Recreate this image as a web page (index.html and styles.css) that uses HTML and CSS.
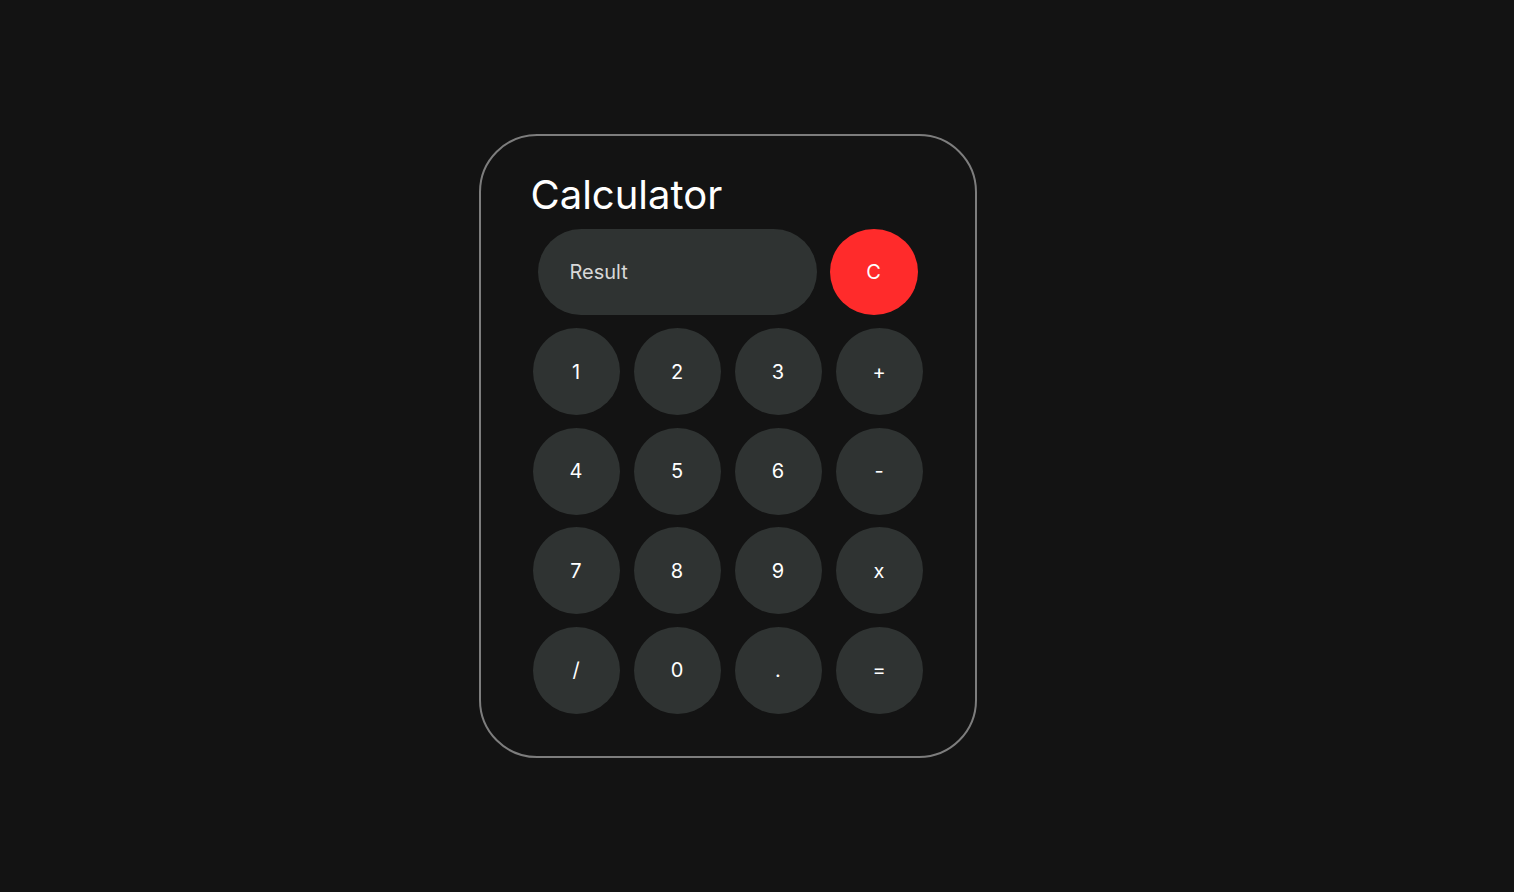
FILE: index.html
```html
<!DOCTYPE html>
<html lang="en">
<head>
<meta charset="utf-8">
<title>Calculator</title>
<link rel="stylesheet" href="styles.css">
</head>
<body>
<main class="page">
  <section class="calc">
    <h1 class="title">Calculator</h1>
    <div class="display-row">
      <div class="result">Result</div>
      <button class="key key-clear">C</button>
    </div>
    <div class="keys">
      <button class="key">1</button>
      <button class="key">2</button>
      <button class="key">3</button>
      <button class="key">+</button>
      <button class="key">4</button>
      <button class="key">5</button>
      <button class="key">6</button>
      <button class="key">-</button>
      <button class="key">7</button>
      <button class="key">8</button>
      <button class="key">9</button>
      <button class="key">x</button>
      <button class="key">/</button>
      <button class="key">0</button>
      <button class="key">.</button>
      <button class="key">=</button>
    </div>
  </section>
</main>
</body>
</html>
```
FILE: styles.css
```css
html, body {
  margin: 0;
  padding: 0;
  height: 100%;
  background: #131313;
  font-family: Inter, "Noto Sans", "Liberation Sans", sans-serif;
}

.page {
  height: 100%;
  display: flex;
  align-items: center;
  justify-content: center;
  padding-right: 59px;
  box-sizing: border-box;
}

.calc {
  box-sizing: border-box;
  width: 498px;
  height: 624px;
  border: 2px solid #7d7d7d;
  border-radius: 58px;
  padding: 35px 0 0 0;
  display: flex;
  flex-direction: column;
}

.title {
  margin: 0 0 10px 50px;
  font-size: 40px;
  font-weight: 400;
  color: #ffffff;
  line-height: 48px;
}

.display-row {
  display: flex;
  justify-content: center;
  gap: 13px;
  margin-bottom: 13px;
}

.result {
  box-sizing: border-box;
  width: 279px;
  height: 86px;
  border-radius: 43px;
  background: #2f3332;
  color: #d8d8d8;
  font-size: 20px;
  display: flex;
  align-items: center;
  padding-left: 32px;
}

.keys {
  display: grid;
  grid-template-columns: repeat(4, 87px);
  grid-auto-rows: 87px;
  column-gap: 14px;
  row-gap: 12.67px;
  justify-content: center;
}

.key {
  width: 87px;
  height: 87px;
  border: none;
  border-radius: 50%;
  background: #2f3332;
  color: #ffffff;
  font-family: inherit;
  font-size: 20px;
  padding: 0;
  display: flex;
  align-items: center;
  justify-content: center;
}

.key-clear {
  width: 88px;
  height: 86px;
  background: #ff2b2b;
}
```
